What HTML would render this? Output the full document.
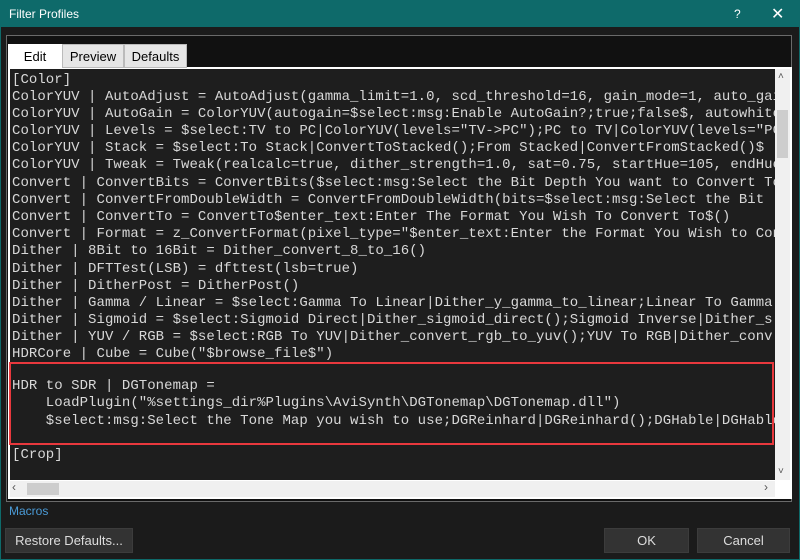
<!DOCTYPE html>
<html><head><style>
*{margin:0;padding:0;box-sizing:border-box}
body{width:800px;height:560px;background:#0e6a6a;position:relative;overflow:hidden;font-family:"Liberation Sans",sans-serif}
.win{position:absolute;left:1px;top:27px;width:798px;height:532px;background:#1b1b1b}
.title{position:absolute;left:0;top:0;width:800px;height:27px;background:#0e6a6a;color:#fff;font-size:12px}
.title span{position:absolute;top:7px}
.panel{position:absolute;left:6px;top:35px;width:786px;height:467px;border:1px solid #6a6a6a;background:#111}
.tab{position:absolute;top:44px;height:24px;font-size:13px;color:#000;text-align:center;line-height:24px;background:#e6e6e6;border:1px solid #bbb}
.ed{position:absolute;left:8px;top:67px;width:784px;height:432px;background:#fff}
.code{position:absolute;left:10px;top:69px;width:765px;height:411px;background:#1e1e1e;overflow:hidden;font-family:"Liberation Mono",monospace;font-size:14px;color:#d8d8d8;white-space:pre;letter-spacing:0.05px}
.code div{position:absolute;left:2px;height:17px;line-height:17px}
.btn{position:absolute;top:528px;height:25px;background:#333;border:1px solid #3c3c3c;color:#ddd;font-size:13px;text-align:center;line-height:23px}
</style></head><body>
<div class="title"><span style="left:9px">Filter Profiles</span><span style="left:734px">?</span><span style="left:771px;font-size:16px;top:4px">✕</span></div>
<div class="win"></div>
<div class="panel"></div>
<div style="position:absolute;left:8px;top:37px;width:782px;height:8px;background:#111"></div>
<div class="ed"></div>
<div class="tab" style="left:8px;width:54px;background:#fff;border-color:#fff;height:25px">Edit</div>
<div class="tab" style="left:62px;width:62px">Preview</div>
<div class="tab" style="left:124px;width:63px">Defaults</div>
<div class="code">
<div style="top:3px">[Color]</div>
<div style="top:20px">ColorYUV | AutoAdjust = AutoAdjust(gamma_limit=1.0, scd_threshold=16, gain_mode=1, auto_gain</div>
<div style="top:37px">ColorYUV | AutoGain = ColorYUV(autogain=$select:msg:Enable AutoGain?;true;false$, autowhite</div>
<div style="top:54px">ColorYUV | Levels = $select:TV to PC|ColorYUV(levels="TV->PC");PC to TV|ColorYUV(levels="PC</div>
<div style="top:71px">ColorYUV | Stack = $select:To Stack|ConvertToStacked();From Stacked|ConvertFromStacked()$</div>
<div style="top:88px">ColorYUV | Tweak = Tweak(realcalc=true, dither_strength=1.0, sat=0.75, startHue=105, endHue</div>
<div style="top:106px">Convert | ConvertBits = ConvertBits($select:msg:Select the Bit Depth You want to Convert To</div>
<div style="top:123px">Convert | ConvertFromDoubleWidth = ConvertFromDoubleWidth(bits=$select:msg:Select the Bit</div>
<div style="top:140px">Convert | ConvertTo = ConvertTo$enter_text:Enter The Format You Wish To Convert To$()</div>
<div style="top:157px">Convert | Format = z_ConvertFormat(pixel_type="$enter_text:Enter the Format You Wish to Con</div>
<div style="top:174px">Dither | 8Bit to 16Bit = Dither_convert_8_to_16()</div>
<div style="top:192px">Dither | DFTTest(LSB) = dfttest(lsb=true)</div>
<div style="top:209px">Dither | DitherPost = DitherPost()</div>
<div style="top:226px">Dither | Gamma / Linear = $select:Gamma To Linear|Dither_y_gamma_to_linear;Linear To Gamma</div>
<div style="top:243px">Dither | Sigmoid = $select:Sigmoid Direct|Dither_sigmoid_direct();Sigmoid Inverse|Dither_s</div>
<div style="top:260px">Dither | YUV / RGB = $select:RGB To YUV|Dither_convert_rgb_to_yuv();YUV To RGB|Dither_conv</div>
<div style="top:277px">HDRCore | Cube = Cube("$browse_file$")</div>
<div style="top:309px">HDR to SDR | DGTonemap =</div>
<div style="top:326px">    LoadPlugin("%settings_dir%Plugins\AviSynth\DGTonemap\DGTonemap.dll")</div>
<div style="top:344px">    $select:msg:Select the Tone Map you wish to use;DGReinhard|DGReinhard();DGHable|DGHable</div>
<div style="top:378px">[Crop]</div>
</div>
<div style="position:absolute;left:9px;top:362px;width:765px;height:83px;border:2px solid #e8383d"></div>
<div style="position:absolute;left:775px;top:69px;width:15px;height:411px;background:#f0f0f0"></div>
<div style="position:absolute;left:777px;top:110px;width:11px;height:48px;background:#cdcdcd"></div>
<div style="position:absolute;left:778px;top:71px;font-size:10px;color:#555">˄</div>
<div style="position:absolute;left:778px;top:466px;font-size:10px;color:#555">˅</div>
<div style="position:absolute;left:10px;top:481px;width:765px;height:16px;background:#f0f0f0"></div>
<div style="position:absolute;left:27px;top:483px;width:32px;height:12px;background:#cdcdcd"></div>
<div style="position:absolute;left:12px;top:480px;font-size:12px;color:#555">‹</div>
<div style="position:absolute;left:764px;top:480px;font-size:12px;color:#555">›</div>
<div style="position:absolute;left:9px;top:504px;font-size:12px;color:#4a9ad6">Macros</div>
<div class="btn" style="left:5px;width:128px">Restore Defaults...</div>
<div class="btn" style="left:604px;width:85px">OK</div>
<div class="btn" style="left:697px;width:93px">Cancel</div>
</body></html>
